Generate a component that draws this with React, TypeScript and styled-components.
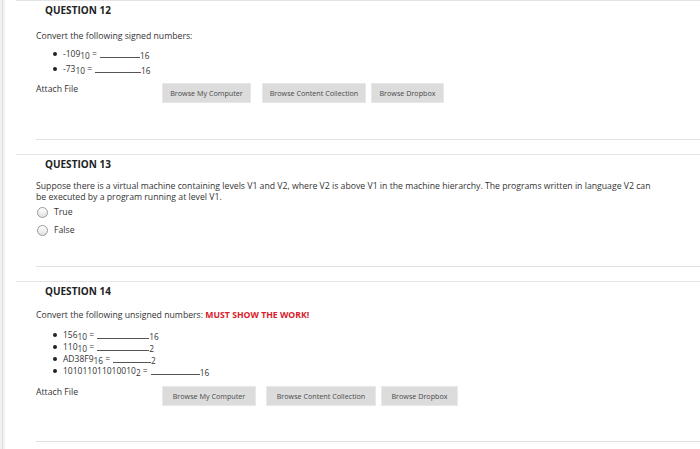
import React from "react";
import styled, { createGlobalStyle } from "styled-components";

const Global = createGlobalStyle`
  html, body { margin: 0; padding: 0; background: #fff; }
  body { font-family: "Open Sans", "Liberation Sans", sans-serif; color: #333; }
  * { box-sizing: border-box; }
`;

const Page = styled.div`
  display: flex;
  width: 700px;
  height: 449px;
  overflow: hidden;
  background: #fff;
`;

const Rail = styled.div`
  width: 6px;
  flex: none;
  background: linear-gradient(to right, #f1f1f1 0 2px, #dcdcdc 2px 3px, #f3f3f3 3px 5px, #fafafa 5px 6px);
`;

const Main = styled.div`
  flex: 1;
  padding-left: 10px;
`;

const Block = styled.section<{ $pb?: number }>`
  border-top: 1px solid #e4e4e4;
  padding: 0 0 ${(p) => p.$pb ?? 14}px 20px;
`;

const Heading = styled.h2`
  margin: 3px 0 0 9px;
  font-size: 10px;
  line-height: 13px;
  font-weight: 700;
  color: #222;
`;

const Prompt = styled.p<{ $mt: number }>`
  margin: ${(p) => p.$mt}px 0 0 0;
  font-size: 8.7px;
  line-height: 11px;
  color: #333;
  padding-right: 40px;
`;

const Must = styled.span`
  color: #d8202b;
  font-weight: 700;
`;

const List = styled.ul<{ $mt: number }>`
  list-style: none;
  margin: ${(p) => p.$mt}px 0 0 0;
  padding: 0 0 0 17px;
`;

const Item = styled.li<{ $lh: number }>`
  display: flex;
  align-items: center;
  font-size: 8.5px;
  line-height: ${(p) => p.$lh}px;
  height: ${(p) => p.$lh}px;
  color: #333;
  &::before {
    content: "";
    width: 4px;
    height: 4px;
    border-radius: 50%;
    background: #222;
    margin-right: 6px;
    flex: none;
  }
`;

const Sub = styled.span`
  font-size: 8.3px;
  position: relative;
  top: 2px;
`;

const Blank = styled.span<{ $w: number }>`
  display: inline-block;
  width: ${(p) => p.$w}px;
  height: 9px;
  border-bottom: 1px solid #555;
  margin: 0 0 0 3px;
  position: relative;
  top: 1px;
`;

const Expr = styled.span`
  display: inline-flex;
  align-items: baseline;
  white-space: pre;
`;

const AttachRow = styled.div<{ $mt: number }>`
  display: flex;
  align-items: flex-start;
  margin-top: ${(p) => p.$mt}px;
`;

const AttachLabel = styled.div`
  width: 126px;
  flex: none;
  font-size: 8.7px;
  line-height: 11px;
  padding-top: 1px;
  color: #333;
`;

const Buttons = styled.div`
  display: flex;
`;

const BrowseButton = styled.button<{ $w: number; $mr: number }>`
  width: ${(p) => p.$w}px;
  height: 20px;
  margin-right: ${(p) => p.$mr}px;
  padding: 0;
  border: 1px solid #e8e8e8;
  background: #dcdcdc;
  color: #4a4a4a;
  font-family: "Open Sans", "Liberation Sans", sans-serif;
  font-size: 7.2px;
  line-height: 18px;
  text-align: center;
  white-space: nowrap;
`;

const Divider = styled.hr<{ $mt: number }>`
  margin: ${(p) => p.$mt}px 0 0 0;
  border: none;
  border-top: 1px solid #e2e2e2;
  height: 0;
`;

const Options = styled.div`
  margin-top: 4px;
  display: flex;
  flex-direction: column;
  gap: 7px;
`;

const Option = styled.label`
  display: flex;
  align-items: center;
  gap: 6px;
  font-size: 8.7px;
  line-height: 11px;
  color: #333;
  padding-left: 1px;
`;

const Radio = styled.span`
  width: 11px;
  height: 11px;
  border-radius: 50%;
  border: 1px solid #9a9a9a;
  background: linear-gradient(#ffffff, #e2e2e2);
  flex: none;
`;

type Entry = { pre: string; sub: string; blank: number; tail: string };

const q12: Entry[] = [
  { pre: "-109", sub: "10", blank: 40, tail: "16" },
  { pre: "-73", sub: "10", blank: 46, tail: "16" },
];

const q14: Entry[] = [
  { pre: "156", sub: "10", blank: 52, tail: "16" },
  { pre: "110", sub: "10", blank: 52, tail: "2" },
  { pre: "AD38F9", sub: "16", blank: 38, tail: "2" },
  { pre: "101011011010010", sub: "2", blank: 49, tail: "16" },
];

function Entries({ items, lh, mt }: { items: Entry[]; lh: number; mt: number }) {
  return (
    <List $mt={mt}>
      {items.map((e, i) => (
        <Item key={i} $lh={lh}>
          <Expr>
            {e.pre}
            <Sub>{e.sub}</Sub>
            {" ="}
            <Blank $w={e.blank} />
            <Sub>{e.tail}</Sub>
          </Expr>
        </Item>
      ))}
    </List>
  );
}

function Attach({ mt, wide }: { mt: number; wide?: boolean }) {
  return (
    <AttachRow $mt={mt}>
      <AttachLabel>Attach File</AttachLabel>
      <Buttons>
        <BrowseButton $w={wide ? 94 : 89} $mr={wide ? 10 : 11}>Browse My Computer</BrowseButton>
        <BrowseButton $w={wide ? 110 : 104} $mr={5}>Browse Content Collection</BrowseButton>
        <BrowseButton $w={wide ? 77 : 73} $mr={0}>Browse Dropbox</BrowseButton>
      </Buttons>
    </AttachRow>
  );
}

export default function App() {
  return (
    <>
      <Global />
      <Page>
        <Rail />
        <Main>
          <Block>
            <Heading>QUESTION 12</Heading>
            <Prompt $mt={14}>Convert the following signed numbers:</Prompt>
            <Entries items={q12} lh={15} mt={4} />
            <Attach mt={7} />
            <Divider $mt={36} />
          </Block>
          <Block>
            <Heading>QUESTION 13</Heading>
            <Prompt $mt={10}>
              Suppose there is a virtual machine containing levels V1 and V2, where V2 is above V1 in the machine
              hierarchy. The programs written in language V2 can be executed by a program running at level V1.
            </Prompt>
            <Options>
              <Option>
                <Radio />
                True
              </Option>
              <Option>
                <Radio />
                False
              </Option>
            </Options>
            <Divider $mt={30} />
          </Block>
          <Block>
            <Heading>QUESTION 14</Heading>
            <Prompt $mt={12}>
              Convert the following unsigned numbers: <Must>MUST SHOW THE WORK!</Must>
            </Prompt>
            <Entries items={q14} lh={12} mt={8} />
            <Attach mt={9} wide />
            <Divider $mt={35} />
          </Block>
        </Main>
      </Page>
    </>
  );
}
